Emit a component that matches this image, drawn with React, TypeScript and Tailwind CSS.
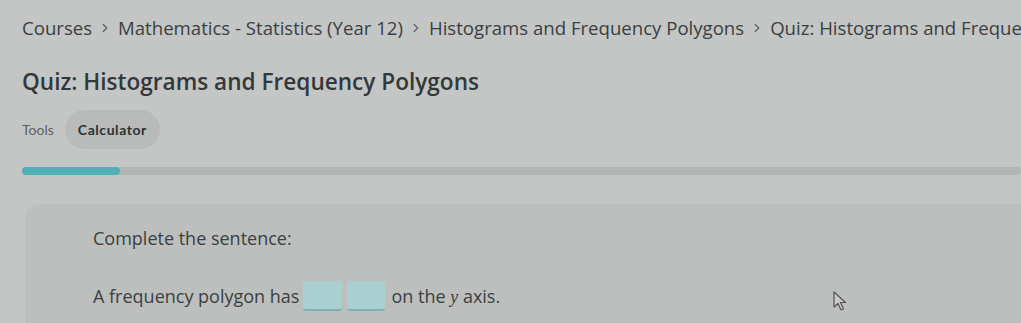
import { ChevronRight } from 'lucide-react';

const crumbs = [
  'Courses',
  'Mathematics - Statistics (Year 12)',
  'Histograms and Frequency Polygons',
  'Quiz: Histograms and Frequency Polygons',
];

export default function App() {
  return (
    <div className="relative h-[323px] w-[1021px] overflow-hidden bg-[#c3c6c5] font-['Open_Sans',sans-serif] text-[#3b3f41]">
      {/* Breadcrumb */}
      <div className="flex items-center overflow-hidden whitespace-nowrap pl-[22px] pt-[16px] text-[18.6px] leading-[24px]">
        {crumbs.map((c, i) => (
          <div key={c} className="flex shrink-0 items-center">
            {i > 0 && <ChevronRight className="mx-[6px] h-[14px] w-[14px] text-[#5a5e60]" strokeWidth={2} />}
            <span>{c}</span>
          </div>
        ))}
      </div>

      {/* Title */}
      <h1 className="pl-[22px] pt-[27px] text-[22.6px] font-semibold leading-[30px] text-[#34383a]">
        Quiz: Histograms and Frequency Polygons
      </h1>

      {/* Tools */}
      <div className="mt-[13px] flex items-center pl-[22px] font-['Lato',sans-serif] text-[14px]">
        <span className="text-[#5d6163]">Tools</span>
        <span className="ml-[11px] rounded-full bg-[#b8bbba] px-[13px] py-[9px] font-bold tracking-[0.04em] text-[#2e3133]">
          Calculator
        </span>
      </div>

      {/* Progress */}
      <div className="ml-[22px] mt-[18px] h-[8px] rounded-full bg-[#b3b6b5]">
        <div className="h-full w-[98px] rounded-full bg-[#4fb0b5]" />
      </div>

      {/* Question card */}
      <div className="ml-[25px] mt-[29px] h-[200px] rounded-tl-[14px] bg-[#bcbfbe] pl-[68px] pt-[22px] text-[18px]">
        <p className="leading-[24px]">Complete the sentence:</p>
        <div className="mt-[31px] flex items-center leading-[24px]">
          <span>A frequency polygon has</span>
          <span className="ml-[4px] h-[30px] w-[39px] rounded-[3px] border-b-2 border-[#7fb0b2] bg-[#a9cfd1]" />
          <span className="ml-[5px] h-[30px] w-[38px] rounded-[3px] border-b-2 border-[#7fb0b2] bg-[#a9cfd1]" />
          <span className="ml-[6px]">
            on the <i className="font-['Liberation_Serif',serif]">y</i> axis.
          </span>
        </div>
      </div>

      {/* Mouse pointer */}
      <svg className="absolute left-[833px] top-[291px]" width="14" height="20" viewBox="0 0 14 20">
        <path d="M1 1 L1 16 L5 12.5 L8 19 L10.5 18 L7.5 11.5 L12.5 11.5 Z" fill="#c8cbca" stroke="#555" strokeWidth="1.2" strokeLinejoin="round" />
      </svg>
    </div>
  );
}
